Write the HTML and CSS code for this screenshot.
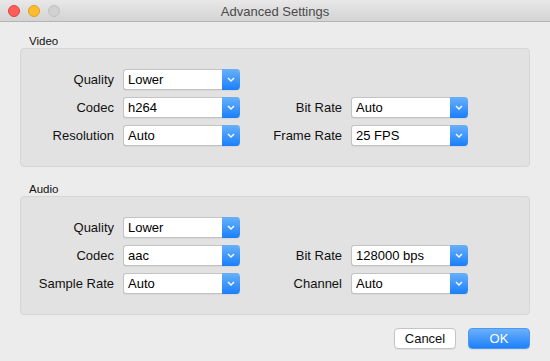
FILE: index.html
```html
<!DOCTYPE html>
<html lang="en">
<head>
  <meta charset="UTF-8">
  <title>Advanced Settings</title>
  <link rel="stylesheet" href="styles.css">
</head>
<body>
<div class="window">
  <div class="titlebar">
    <div class="lights">
      <i class="light close"></i>
      <i class="light min"></i>
      <i class="light zoom"></i>
    </div>
    <div class="title">Advanced Settings</div>
  </div>

  <div class="content">
    <div class="group-label">Video</div>
    <div class="group">
      <div class="grid">
        <label class="lbl">Quality</label>
        <div class="popup"><span>Lower</span><b class="arrow"><svg width="8" height="5" viewBox="0 0 8 5"><path d="M1 1l3 3 3-3" fill="none" stroke="#fff" stroke-width="1.4"/></svg></b></div>
        <span></span><span></span>

        <label class="lbl">Codec</label>
        <div class="popup"><span>h264</span><b class="arrow"><svg width="8" height="5" viewBox="0 0 8 5"><path d="M1 1l3 3 3-3" fill="none" stroke="#fff" stroke-width="1.4"/></svg></b></div>
        <label class="lbl">Bit Rate</label>
        <div class="popup"><span>Auto</span><b class="arrow"><svg width="8" height="5" viewBox="0 0 8 5"><path d="M1 1l3 3 3-3" fill="none" stroke="#fff" stroke-width="1.4"/></svg></b></div>

        <label class="lbl">Resolution</label>
        <div class="popup"><span>Auto</span><b class="arrow"><svg width="8" height="5" viewBox="0 0 8 5"><path d="M1 1l3 3 3-3" fill="none" stroke="#fff" stroke-width="1.4"/></svg></b></div>
        <label class="lbl">Frame Rate</label>
        <div class="popup"><span>25 FPS</span><b class="arrow"><svg width="8" height="5" viewBox="0 0 8 5"><path d="M1 1l3 3 3-3" fill="none" stroke="#fff" stroke-width="1.4"/></svg></b></div>
      </div>
    </div>

    <div class="group-label audio">Audio</div>
    <div class="group">
      <div class="grid">
        <label class="lbl">Quality</label>
        <div class="popup"><span>Lower</span><b class="arrow"><svg width="8" height="5" viewBox="0 0 8 5"><path d="M1 1l3 3 3-3" fill="none" stroke="#fff" stroke-width="1.4"/></svg></b></div>
        <span></span><span></span>

        <label class="lbl">Codec</label>
        <div class="popup"><span>aac</span><b class="arrow"><svg width="8" height="5" viewBox="0 0 8 5"><path d="M1 1l3 3 3-3" fill="none" stroke="#fff" stroke-width="1.4"/></svg></b></div>
        <label class="lbl">Bit Rate</label>
        <div class="popup"><span>128000 bps</span><b class="arrow"><svg width="8" height="5" viewBox="0 0 8 5"><path d="M1 1l3 3 3-3" fill="none" stroke="#fff" stroke-width="1.4"/></svg></b></div>

        <label class="lbl">Sample Rate</label>
        <div class="popup"><span>Auto</span><b class="arrow"><svg width="8" height="5" viewBox="0 0 8 5"><path d="M1 1l3 3 3-3" fill="none" stroke="#fff" stroke-width="1.4"/></svg></b></div>
        <label class="lbl">Channel</label>
        <div class="popup"><span>Auto</span><b class="arrow"><svg width="8" height="5" viewBox="0 0 8 5"><path d="M1 1l3 3 3-3" fill="none" stroke="#fff" stroke-width="1.4"/></svg></b></div>
      </div>
    </div>

    <div class="buttons">
      <button class="btn">Cancel</button>
      <button class="btn primary">OK</button>
    </div>
  </div>
</div>
</body>
</html>
```

FILE: styles.css
```css
body {
  margin:0;
  padding:0;
  background:#ececec;
  font-family:"Liberation Sans", Arial, sans-serif;
  font-size:13px;
  color:#000;
}

.window {
  width:550px;
  height:361px;
  overflow:hidden;
}

/* title bar */
.titlebar {
  height:21px;
  display:flex;
  align-items:center;
  justify-content:center;
  position:relative;
  background:linear-gradient(#e8e8e8, #d3d3d3);
  border-bottom:1px solid #b4b4b4;
}
.lights {
  position:absolute;
  left:8px;
  top:5px;
  display:flex;
  gap:8px;
}
.light {
  width:12px;
  height:12px;
  border-radius:50%;
  box-sizing:border-box;
}
.close { background:#fc5f57; border:1px solid #e0443e; }
.min   { background:#fdbc2e; border:1px solid #dea123; }
.zoom  { background:#d1d1d1; border:1px solid #bfbfbf; }
.title {
  color:#4a4a4a;
  font-size:13px;
  padding-top:1px;
}

.content {
  padding:12px 20px 0 20px;
}

.group-label {
  font-size:11.5px;
  line-height:14px;
  padding-left:9px;
  color:#111;
}
.group-label.audio {
  margin-top:15px;
}

.group {
  width:508px;
  background:#e2e2e2;
  border:1px solid #d6d6d6;
  border-radius:4px;
  padding:20px 0 20px 0;
}

.grid {
  display:grid;
  grid-template-columns:93px 117px 93px 117px;
  column-gap:9px;
  row-gap:7px;
  grid-auto-rows:21px;
}
.lbl {
  text-align:right;
  align-self:center;
  line-height:21px;
  color:#111;
}

/* popup button */
.popup {
  display:flex;
  height:21px;
  box-sizing:border-box;
  background:#fff;
  border:1px solid #c3c3c3;
  border-right:0;
  border-radius:3px;
  box-shadow:0 1px 0 rgba(0,0,0,.05);
}
.popup span {
  flex:1;
  padding-left:4px;
  line-height:19px;
  white-space:nowrap;
  overflow:hidden;
}
.arrow {
  width:18px;
  margin:-1px 0;
  display:flex;
  align-items:center;
  justify-content:center;
  background:linear-gradient(#68b1fa, #1a7ffb);
  border-radius:0 4px 4px 0;
}

.buttons {
  display:flex;
  justify-content:flex-end;
  gap:12px;
  margin-top:13px;
  width:510px;
}
.btn {
  width:62px;
  height:21px;
  font-family:"Liberation Sans", Arial, sans-serif;
  font-size:13px;
  border-radius:4px;
  background:#fff;
  border:1px solid #c4c4c4;
  box-shadow:0 1px 0 rgba(0,0,0,.06);
  color:#111;
  padding:0;
}
.btn.primary {
  background:linear-gradient(#6bb1fb, #1d80fb);
  border-color:#4a98f7;
  color:#fff;
}
```
